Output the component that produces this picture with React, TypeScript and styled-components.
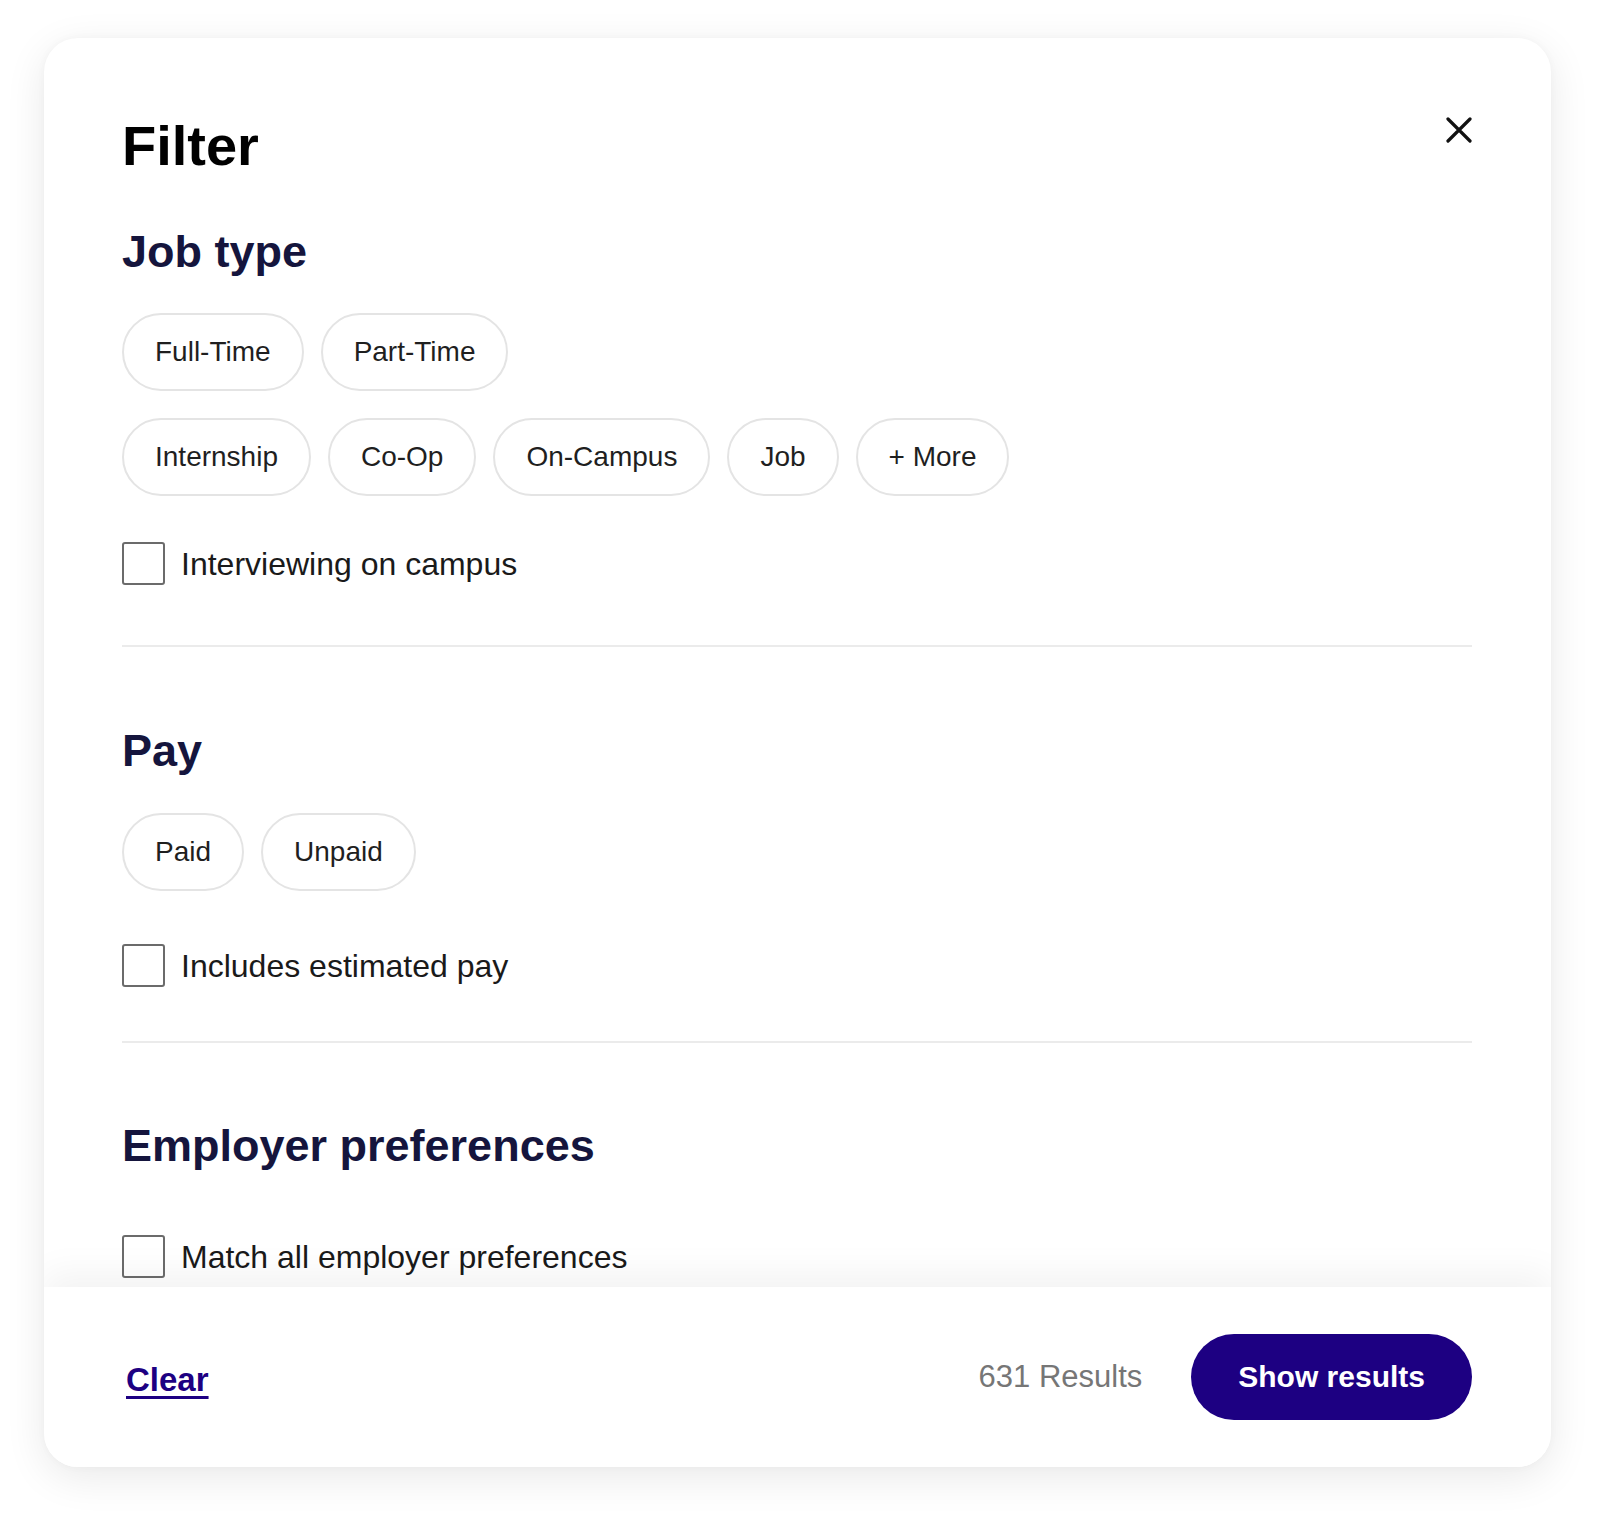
import React, { useState } from 'react';
import styled, { createGlobalStyle } from 'styled-components';

const GlobalStyle = createGlobalStyle`
  html, body {
    margin: 0;
    padding: 0;
    background: #ffffff;
    font-family: "Liberation Sans", Arial, sans-serif;
  }
  * {
    box-sizing: border-box;
  }
`;

const Page = styled.div`
  width: 1600px;
  height: 1526px;
  padding: 38px 0 0 44px;
  overflow: hidden;
`;

const Card = styled.div`
  width: 1507px;
  height: 1429px;
  display: flex;
  flex-direction: column;
  background: #ffffff;
  border-radius: 34px;
  box-shadow: 0 10px 42px rgba(0, 0, 0, 0.09), 0 0 8px rgba(0, 0, 0, 0.03);
  overflow: hidden;
`;

const Body = styled.div`
  flex: 1;
  min-height: 0;
  overflow: hidden;
  padding: 76px 79px 0 78px;
`;

const Header = styled.div`
  display: flex;
  justify-content: space-between;
  align-items: flex-start;
`;

const Title = styled.h1`
  margin: 0;
  font-size: 56px;
  line-height: 64px;
  font-weight: 700;
  color: #000000;
`;

const CloseButton = styled.button`
  width: 26px;
  height: 26px;
  margin-top: 3px;
  padding: 0;
  border: none;
  background: none;
  cursor: pointer;
  display: flex;

  svg {
    display: block;
  }
`;

const SectionTitle = styled.h2<{ $mt: number }>`
  margin: ${(p) => p.$mt}px 0 0;
  font-size: 45px;
  line-height: 52px;
  font-weight: 700;
  color: #15153d;
`;

const ChipRow = styled.div<{ $mt: number }>`
  display: flex;
  flex-wrap: wrap;
  gap: 17px;
  margin-top: ${(p) => p.$mt}px;
`;

const Chip = styled.button<{ $active?: boolean }>`
  height: 78px;
  padding: 0 31px;
  display: inline-flex;
  align-items: center;
  border: 2px solid ${(p) => (p.$active ? '#1d0082' : '#e4e4e4')};
  border-radius: 39px;
  background: ${(p) => (p.$active ? '#efeaff' : '#ffffff')};
  font-family: "Liberation Sans", Arial, sans-serif;
  font-size: 28px;
  color: #1f1f1f;
  cursor: pointer;
`;

const CheckRow = styled.label<{ $mt: number }>`
  display: flex;
  align-items: center;
  gap: 16px;
  margin-top: ${(p) => p.$mt}px;
  cursor: pointer;
`;

const Box = styled.span<{ $checked: boolean }>`
  width: 43px;
  height: 43px;
  flex: none;
  border: 2px solid #6b6b6b;
  border-radius: 3px;
  background: ${(p) => (p.$checked ? '#1d0082' : '#ffffff')};
`;

const CheckLabel = styled.span`
  font-size: 32px;
  line-height: 40px;
  color: #1a1a1a;
`;

const Divider = styled.hr<{ $mt: number }>`
  margin: ${(p) => p.$mt}px 0 0;
  border: none;
  border-top: 2px solid #ebebeb;
`;

const Footer = styled.div`
  height: 180px;
  flex: none;
  display: flex;
  align-items: center;
  justify-content: space-between;
  padding: 0 79px 0 82px;
  background: #ffffff;
  box-shadow: 0 -14px 34px rgba(0, 0, 0, 0.05);
  position: relative;
`;

const ClearLink = styled.a`
  margin-top: 5px;
  font-size: 33px;
  font-weight: 700;
  color: #1d0082;
  text-decoration: underline;
  text-decoration-thickness: 3px;
  text-underline-offset: 5px;
  cursor: pointer;
`;

const FooterRight = styled.div`
  display: flex;
  align-items: center;
  gap: 49px;
`;

const ResultCount = styled.span`
  font-size: 31px;
  color: #767676;
`;

const ShowButton = styled.button`
  height: 86px;
  padding: 0 47px;
  border: none;
  border-radius: 43px;
  background: #1d0082;
  color: #ffffff;
  font-family: "Liberation Sans", Arial, sans-serif;
  font-size: 30px;
  font-weight: 700;
  cursor: pointer;
`;

const CloseIcon = () => (
  <svg width="26" height="26" viewBox="0 0 26 26" fill="none">
    <path d="M2 2L24 24M24 2L2 24" stroke="#111111" strokeWidth="3.2" strokeLinecap="round" />
  </svg>
);

type CheckProps = { label: string; mt: number; checked: boolean; onToggle: () => void };

const Check: React.FC<CheckProps> = ({ label, mt, checked, onToggle }) => (
  <CheckRow $mt={mt} onClick={onToggle}>
    <Box $checked={checked} />
    <CheckLabel>{label}</CheckLabel>
  </CheckRow>
);

export default function App() {
  const [selected, setSelected] = useState<string[]>([]);
  const [checks, setChecks] = useState<Record<string, boolean>>({});

  const toggleChip = (name: string) =>
    setSelected((s) => (s.includes(name) ? s.filter((x) => x !== name) : [...s, name]));
  const toggleCheck = (name: string) => setChecks((c) => ({ ...c, [name]: !c[name] }));

  const renderChips = (names: string[]) =>
    names.map((n) => (
      <Chip key={n} $active={selected.includes(n)} onClick={() => toggleChip(n)}>
        {n}
      </Chip>
    ));

  return (
    <>
      <GlobalStyle />
      <Page>
        <Card>
          <Body>
            <Header>
              <Title>Filter</Title>
              <CloseButton aria-label="Close">
                <CloseIcon />
              </CloseButton>
            </Header>

            <SectionTitle $mt={48}>Job type</SectionTitle>
            <ChipRow $mt={35}>{renderChips(['Full-Time', 'Part-Time'])}</ChipRow>
            <ChipRow $mt={27}>
              {renderChips(['Internship', 'Co-Op', 'On-Campus', 'Job', '+ More'])}
            </ChipRow>
            <Check
              label="Interviewing on campus"
              mt={46}
              checked={!!checks.campus}
              onToggle={() => toggleCheck('campus')}
            />
            <Divider $mt={60} />

            <SectionTitle $mt={78}>Pay</SectionTitle>
            <ChipRow $mt={36}>{renderChips(['Paid', 'Unpaid'])}</ChipRow>
            <Check
              label="Includes estimated pay"
              mt={53}
              checked={!!checks.pay}
              onToggle={() => toggleCheck('pay')}
            />
            <Divider $mt={54} />

            <SectionTitle $mt={77}>Employer preferences</SectionTitle>
            <Check
              label="Match all employer preferences"
              mt={63}
              checked={!!checks.employer}
              onToggle={() => toggleCheck('employer')}
            />
          </Body>

          <Footer>
            <ClearLink
              onClick={() => {
                setSelected([]);
                setChecks({});
              }}
            >
              Clear
            </ClearLink>
            <FooterRight>
              <ResultCount>631 Results</ResultCount>
              <ShowButton>Show results</ShowButton>
            </FooterRight>
          </Footer>
        </Card>
      </Page>
    </>
  );
}
